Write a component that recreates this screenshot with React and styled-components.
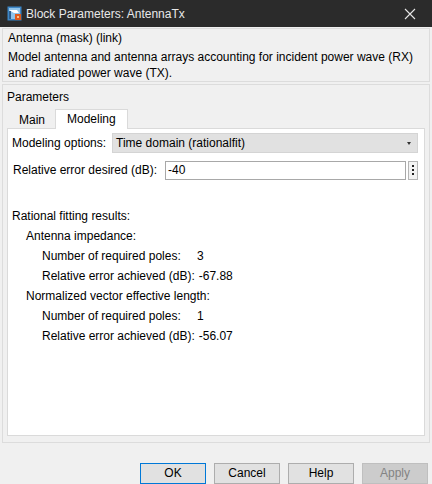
import React from 'react';
import styled, { createGlobalStyle } from 'styled-components';

const GlobalStyle = createGlobalStyle`
  *, *::before, *::after {
    box-sizing: border-box;
  }
  html, body {
    margin: 0;
    padding: 0;
    background: #f0f0f0;
  }
  body {
    font-family: "Liberation Sans", Arial, sans-serif;
    font-size: 12px;
    color: #000;
  }
`;

const Dialog = styled.div`
  width: 432px;
  height: 484px;
  display: flex;
  flex-direction: column;
  background: #f0f0f0;
  overflow: hidden;
`;

const TitleBar = styled.div`
  height: 27px;
  flex: none;
  display: flex;
  align-items: center;
  background: #2b2b2b;
  color: #e8e8e8;
  padding: 0 0 0 7px;
  font-size: 12px;
`;

const TitleText = styled.span`
  flex: 1;
  margin-left: 4px;
`;

const CloseBtn = styled.div`
  width: 44px;
  display: flex;
  justify-content: center;
  align-items: center;
`;

const Body = styled.div`
  flex: 1;
  display: flex;
  flex-direction: column;
  padding: 1px 2px 0 2px;
`;

const Group = styled.div`
  flex: none;
  border: 1px solid #dcdcdc;
  display: flex;
  flex-direction: column;
  padding: ${p => p.$pad};
  height: ${p => p.$height}px;
  margin-bottom: 2px;
`;

const GroupTitle = styled.div`
  height: 18px;
  line-height: 18px;
`;

const Description = styled.div`
  line-height: 16px;
  margin-top: 2px;
  white-space: nowrap;
`;

const TabBar = styled.div`
  display: flex;
  align-items: flex-end;
  height: 20px;
  margin-top: 2px;
  padding-left: 2px;
`;

const Tab = styled.div`
  height: ${p => (p.$active ? '20px' : '18px')};
  line-height: 18px;
  padding: 0 ${p => (p.$active ? '11px' : '9px')};
  background: ${p => (p.$active ? '#fff' : 'transparent')};
  border: 1px solid ${p => (p.$active ? '#dadada' : 'transparent')};
  border-bottom: none;
  margin-bottom: ${p => (p.$active ? '-1px' : '0')};
  position: relative;
  z-index: 1;
`;

const TabPanel = styled.div`
  flex: 1;
  background: #fff;
  border: 1px solid #dadada;
  padding: 4px 5px 0 3px;
  display: flex;
  flex-direction: column;
`;

const Row = styled.div`
  display: flex;
  align-items: center;
  height: 20px;
  margin-top: ${p => p.$mt || '0'};
`;

const Label = styled.span`
  padding: 0 ${p => p.$pr}px 0 ${p => p.$pl}px;
  white-space: nowrap;
`;

const Select = styled.div`
  flex: 1;
  height: 20px;
  display: flex;
  align-items: center;
  background: #e1e1e1;
  border: 1px solid #d4d4d4;
  padding-left: 3px;
  margin-right: 1px;
`;

const SelectText = styled.span`
  flex: 1;
`;

const Caret = styled.span`
  width: 0;
  height: 0;
  border-left: 2.5px solid transparent;
  border-right: 2.5px solid transparent;
  border-top: 3px solid #333;
  margin-right: 6px;
`;

const Input = styled.div`
  flex: 1;
  height: 19px;
  line-height: 17px;
  border: 1px solid #a8a8a8;
  padding-left: 2px;
  background: #fff;
`;

const DotsBtn = styled.div`
  width: 10px;
  height: 19px;
  margin: 0 1px 0 2px;
  border: 1px solid #b5b5b5;
  background: #f3f3f3;
  display: flex;
  flex-direction: column;
  align-items: center;
  justify-content: center;
  gap: 2px;
`;

const Dot = styled.span`
  width: 2px;
  height: 2px;
  background: #222;
`;

const Spacer = styled.div`
  height: ${p => p.$h}px;
  flex: none;
`;

const Result = styled.div`
  display: flex;
  height: 20px;
  line-height: 20px;
  padding-left: ${p => p.$indent}px;
`;

const ResultLabel = styled.span`
  width: ${p => (p.$w ? `${p.$w}px` : 'auto')};
  margin-right: ${p => (p.$w ? '0' : '4px')};
  white-space: nowrap;
`;

const Footer = styled.div`
  flex: 1;
  display: flex;
  justify-content: flex-end;
  align-items: flex-start;
  gap: 8px;
  padding: 18px 2px 0 0;
`;

const Button = styled.div`
  width: 66px;
  height: 21px;
  line-height: 19px;
  text-align: center;
  background: ${p => (p.$disabled ? '#cccccc' : '#e1e1e1')};
  color: ${p => (p.$disabled ? '#838383' : '#000')};
  border: 1px solid ${p => (p.$primary ? '#0078d7' : p.$disabled ? '#bfbfbf' : '#adadad')};
`;

const BlockIcon = () => (
  <svg width="15" height="15" viewBox="0 0 15 15">
    <rect x="0.5" y="0.5" width="14" height="14" fill="#3d86c6" />
    <rect x="2" y="2" width="11" height="11" fill="#8fc3ea" />
    <path d="M2 4 L10 4 L12 7 L7 7 Z" fill="#ffffff" />
    <rect x="2" y="5" width="2" height="8" fill="#2f5f8f" />
    <rect x="8" y="8" width="6" height="6" fill="#e05a1c" />
    <rect x="10" y="10" width="2" height="2" fill="#f7c08a" />
  </svg>
);

const CloseIcon = () => (
  <svg width="12" height="12" viewBox="0 0 12 12">
    <path d="M1 1 L11 11 M11 1 L1 11" stroke="#e6e6e6" strokeWidth="1.1" />
  </svg>
);

const results = [
  { indent: 1, label: 'Rational fitting results:' },
  { indent: 15, label: 'Antenna impedance:' },
  { indent: 31, label: 'Number of required poles:', w: 155, value: '3' },
  { indent: 31, label: 'Relative error achieved (dB):', value: '-67.88' },
  { indent: 15, label: 'Normalized vector effective length:' },
  { indent: 31, label: 'Number of required poles:', w: 155, value: '1' },
  { indent: 31, label: 'Relative error achieved (dB):', value: '-56.07' },
];

export default function App() {
  return (
    <>
      <GlobalStyle />
      <Dialog>
        <TitleBar>
          <BlockIcon />
          <TitleText>Block Parameters: AntennaTx</TitleText>
          <CloseBtn>
            <CloseIcon />
          </CloseBtn>
        </TitleBar>
        <Body>
          <Group $height={54} $pad="0 5px 0 5px">
            <GroupTitle>Antenna (mask) (link)</GroupTitle>
            <Description>
              Model antenna and antenna arrays accounting for incident power wave (RX)
              <br />
              and radiated power wave (TX).
            </Description>
          </Group>
          <Group $height={359} $pad="3px 4px 6px 4px">
            <GroupTitle>Parameters</GroupTitle>
            <TabBar>
              <Tab>Main</Tab>
              <Tab $active>Modeling</Tab>
            </TabBar>
            <TabPanel>
              <Row>
                <Label $pl={1} $pr={6}>Modeling options:</Label>
                <Select>
                  <SelectText>Time domain (rationalfit)</SelectText>
                  <Caret />
                </Select>
              </Row>
              <Row $mt="7px">
                <Label $pl={2} $pr={8}>Relative error desired (dB):</Label>
                <Input>-40</Input>
                <DotsBtn>
                  <Dot />
                  <Dot />
                  <Dot />
                </DotsBtn>
              </Row>
              <Spacer $h={26} />
              {results.map((r, i) => (
                <Result key={i} $indent={r.indent}>
                  <ResultLabel $w={r.w}>{r.label}</ResultLabel>
                  {r.value && <span>{r.value}</span>}
                </Result>
              ))}
            </TabPanel>
          </Group>
          <Footer>
            <Button $primary>OK</Button>
            <Button>Cancel</Button>
            <Button>Help</Button>
            <Button $disabled>Apply</Button>
          </Footer>
        </Body>
      </Dialog>
    </>
  );
}
